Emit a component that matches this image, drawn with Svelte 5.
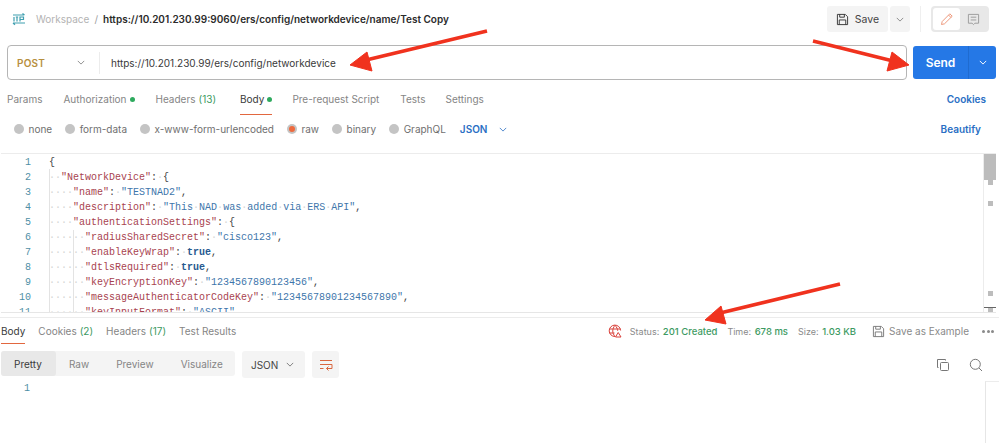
<script lang="ts">
	// Request builder view: header, url bar, request tabs, editor, response pane
	const requestTabs = [
		{ label: 'Params' },
		{ label: 'Authorization', dot: true },
		{ label: 'Headers', count: '(13)' },
		{ label: 'Body', dot: true, active: true },
		{ label: 'Pre-request Script' },
		{ label: 'Tests' },
		{ label: 'Settings' }
	];

	const bodyTypes = ['none', 'form-data', 'x-www-form-urlencoded', 'raw', 'binary', 'GraphQL'];

	const responseTabs = [
		{ label: 'Body', active: true },
		{ label: 'Cookies', count: '(2)' },
		{ label: 'Headers', count: '(17)' },
		{ label: 'Test Results' }
	];

	const views = ['Pretty', 'Raw', 'Preview', 'Visualize'];

	// scrollbar minimap ticks, y offset inside the editor
	const ticks = [26, 47, 137, 154];

	// t: k = key, s = string, b = boolean, p = punctuation
	const lines = [
		{ indent: 0, parts: [['p', '{']] },
		{ indent: 2, parts: [['k', '"NetworkDevice"'], ['p', ':'], ['d', '·'], ['p', '{']] },
		{ indent: 4, parts: [['k', '"name"'], ['p', ':'], ['d', '·'], ['s', '"TESTNAD2"'], ['p', ',']] },
		{ indent: 4, parts: [['k', '"description"'], ['p', ':'], ['d', '·'], ['s', '"This'], ['d', '·'], ['s', 'NAD'], ['d', '·'], ['s', 'was'], ['d', '·'], ['s', 'added'], ['d', '·'], ['s', 'via'], ['d', '·'], ['s', 'ERS'], ['d', '·'], ['s', 'API"'], ['p', ',']] },
		{ indent: 4, parts: [['k', '"authenticationSettings"'], ['p', ':'], ['d', '·'], ['p', '{']] },
		{ indent: 6, parts: [['k', '"radiusSharedSecret"'], ['p', ':'], ['d', '·'], ['s', '"cisco123"'], ['p', ',']] },
		{ indent: 6, parts: [['k', '"enableKeyWrap"'], ['p', ':'], ['d', '·'], ['b', 'true'], ['p', ',']] },
		{ indent: 6, parts: [['k', '"dtlsRequired"'], ['p', ':'], ['d', '·'], ['b', 'true'], ['p', ',']] },
		{ indent: 6, parts: [['k', '"keyEncryptionKey"'], ['p', ':'], ['d', '·'], ['s', '"1234567890123456"'], ['p', ',']] },
		{ indent: 6, parts: [['k', '"messageAuthenticatorCodeKey"'], ['p', ':'], ['d', '·'], ['s', '"12345678901234567890"'], ['p', ',']] },
		{ indent: 6, parts: [['k', '"keyInputFormat"'], ['p', ':'], ['d', '·'], ['s', '"ASCII"'], ['p', ',']] }
	];
</script>

<div class="page">
	<header class="topbar">
		<svg class="logo" viewBox="0 0 14 14" width="14" height="14" fill="none" stroke="#3f9fb0" stroke-width="1.200">
			<path d="M1 3h11M10.500 1.500 12.500 3M1 11h12M1 11l2 1.800" />
			<path d="M2 5v4.500M5 5v4.500M3.800 5h2.400M8 9.500V5h3.500v2.500H8" />
		</svg>
		<span class="crumb">Workspace</span>
		<span class="slash">/</span>
		<span class="title">https://10.201.230.99:9060/ers/config/networkdevice/name/Test Copy</span>
		<div class="top-actions">
			<button class="save" type="button">
				<svg viewBox="0 0 14 14" width="13" height="13" fill="none" stroke="#333" stroke-width="1">
					<path d="M1.500 1.500h8.500l2.500 2.500v8.500h-11z" />
					<path d="M4 1.500v3h5v-3M3.500 12.500v-5h7v5" />
				</svg>
				Save
			</button>
			<button class="save-more" type="button" aria-label="More">
				<svg viewBox="0 0 10 6" width="8" height="5" fill="none" stroke="#777" stroke-width="1"><path d="M1 1l4 4 4-4" /></svg>
			</button>
			<span class="vr"></span>
			<div class="mode">
				<span class="mode-on">
					<svg viewBox="0 0 14 14" width="14" height="14" fill="none" stroke="#ee9a7e" stroke-width="1">
						<path d="M1.500 12.500l.7-3L9.800 1.800l2.400 2.400-7.700 7.600zM8.500 3l2.500 2.500" />
					</svg>
				</span>
				<span class="mode-off">
					<svg viewBox="0 0 14 14" width="13" height="13" fill="none" stroke="#999" stroke-width="1">
						<path d="M1.500 1.500h11v9.500H8.500L7 12.500 5.500 11h-4zM4 4.500h6M4 7.500h6" />
					</svg>
				</span>
			</div>
		</div>
	</header>

	<div class="urlrow">
		<div class="urlbar">
			<span class="method">POST</span>
			<svg class="method-caret" viewBox="0 0 10 6" width="8" height="5" fill="none" stroke="#777" stroke-width="1"><path d="M1 1l4 4 4-4" /></svg>
			<span class="url">https://10.201.230.99/ers/config/networkdevice</span>
		</div>
		<div class="send">
			<span class="send-label">Send</span>
			<span class="send-more">
				<svg viewBox="0 0 10 6" width="8" height="5" fill="none" stroke="#fff" stroke-width="1.200"><path d="M1 1l4 4 4-4" /></svg>
			</span>
		</div>
	</div>

	<nav class="tabs req-tabs">
		{#each requestTabs as tab}
			<span class="tab" class:active={tab.active}>
				{tab.label}
				{#if tab.count}<span class="count">{tab.count}</span>{/if}
				{#if tab.dot}<i class="dot"></i>{/if}
			</span>
		{/each}
		<span class="link push">Cookies</span>
	</nav>

	<div class="bodytypes">
		{#each bodyTypes as type}
			<span class="radio-item">
				<i class="radio" class:on={type === 'raw'}></i>{type}
			</span>
		{/each}
		<span class="lang">JSON
			<svg viewBox="0 0 10 6" width="8" height="5" fill="none" stroke="#2a6fc4" stroke-width="1"><path d="M1 1l4 4 4-4" /></svg>
		</span>
		<span class="link push beautify">Beautify</span>
	</div>

	<section class="editor">
		<div class="code">
			{#each lines as line, i}
				<div class="line">
					<span class="ln">{i + 1}</span>
					<span class="src"><span class="ws">{'·'.repeat(line.indent)}</span>{#each line.parts as part}<span class={part[0]}>{part[1]}</span>{/each}</span>
				</div>
			{/each}
			<i class="guide g1"></i>
			<i class="guide g2"></i>
		</div>
		<div class="scroll">
			<i class="thumb"></i>
			{#each ticks as top}
				<i class="tick" style="top: {top}px"></i>
			{/each}
			<i class="cursor"></i>
		</div>
	</section>

	<nav class="tabs res-tabs">
		{#each responseTabs as tab}
			<span class="tab" class:active={tab.active}>
				{tab.label}
				{#if tab.count}<span class="count">{tab.count}</span>{/if}
			</span>
		{/each}
		<div class="status">
			<svg class="globe" viewBox="0 0 14 14" width="14" height="14" fill="none" stroke="#d9403a" stroke-width="1">
				<path d="M7 12.500A5.700 5.700 0 1 1 12.600 6.500M1.500 5h11M1.500 9h5M7 1.300C4 5 4 9 7 12.500M7 1.300c1.800 2 2.600 3.800 2.700 5.500" />
				<path d="M10.200 8.500l2.800 4.500H7.500z" />
			</svg>
			<span class="meta">Status: <b>201 Created</b></span>
			<span class="meta">Time: <b>678 ms</b></span>
			<span class="meta">Size: <b>1.03 KB</b></span>
			<span class="example">
				<svg viewBox="0 0 14 14" width="13" height="13" fill="none" stroke="#777" stroke-width="1">
					<path d="M1.500 1.500h8.500l2.500 2.500v8.500h-11z" />
					<path d="M4 1.500v3h5v-3M3.500 12.500v-5h7v5" />
				</svg>
				Save as Example
			</span>
			<span class="more"><i></i><i></i><i></i></span>
		</div>
	</nav>

	<div class="viewbar">
		<div class="views">
			{#each views as view, i}
				<span class="view" class:current={i === 0}>{view}</span>
			{/each}
		</div>
		<span class="format">JSON
			<svg viewBox="0 0 10 6" width="8" height="5" fill="none" stroke="#666" stroke-width="1"><path d="M1 1l4 4 4-4" /></svg>
		</span>
		<span class="wrap">
			<svg viewBox="0 0 14 14" width="14" height="14" fill="none" stroke="#d9663f" stroke-width="1">
				<path d="M1 2.500h12M1 6.500h12M1 10.500h3.500M13 6.500v4H7.500M9.500 8.500l-2 2 2 2" />
			</svg>
		</span>
		<div class="view-tools">
			<svg viewBox="0 0 14 14" width="14" height="14" fill="none" stroke="#777" stroke-width="1">
				<rect x="4.500" y="4.500" width="8" height="8" rx="1" />
				<path d="M2.500 9.500h-1v-8h8v1" />
			</svg>
			<svg viewBox="0 0 14 14" width="14" height="14" fill="none" stroke="#777" stroke-width="1">
				<circle cx="6.300" cy="6.300" r="5" />
				<path d="M10 10l3 3" />
			</svg>
		</div>
	</div>

	<div class="output">
		<span class="ln">1</span>
		<div class="output-scroll"></div>
	</div>

	<!-- annotation arrows drawn over the screenshot -->
	<svg class="arrows" viewBox="0 0 999 443" width="999" height="443">
		<g fill="#f0321e" stroke="#f0321e">
			<path d="M487 31 362 61" stroke-width="3.500" />
			<path d="M350 65 367 52 372 71z" />
			<path d="M813 41 897 62" stroke-width="3.500" />
			<path d="M909 65 892 52 887 71z" />
			<path d="M840 284 716 314" stroke-width="3.500" />
			<path d="M705 320 721 306 726 324z" />
		</g>
	</svg>
</div>

<style>
	:global(body) {
		margin: 0;
		background: #fff;
	}

	.page {
		position: relative;
		width: 999px;
		height: 443px;
		overflow: hidden;
		font-family: Inter, 'Liberation Sans', sans-serif;
		font-size: 10px;
		color: #6b6b6b;
		background: #fff;
	}

	svg {
		display: block;
		flex: none;
	}

	.topbar {
		display: flex;
		align-items: center;
		height: 26px;
		padding: 6px 10px 0 12px;
	}

	.logo {
		margin-right: 10px;
	}

	.crumb {
		color: #b3b3b3;
	}

	.slash {
		margin: 0 5px;
		color: #a0a0a0;
	}

	.title {
		color: #2b2b2b;
		font-weight: 600;
		white-space: nowrap;
	}

	.top-actions {
		display: flex;
		align-items: center;
		margin-left: auto;
	}

	.save,
	.save-more {
		display: flex;
		align-items: center;
		justify-content: center;
		height: 26px;
		border: 0;
		border-radius: 3px;
		background: #f4f4f4;
		font: inherit;
		font-size: 10.500px;
		color: #444;
		padding: 0;
	}

	.save {
		gap: 6px;
		width: 61px;
	}

	.save-more {
		width: 20px;
		margin-left: 2px;
	}

	.vr {
		width: 1px;
		height: 26px;
		margin: 0 10px;
		background: #efefef;
	}

	.mode {
		display: flex;
		width: 58px;
		height: 26px;
		box-sizing: border-box;
		padding: 2px;
		border-radius: 4px;
		background: #e8e8e8;
	}

	.mode-on,
	.mode-off {
		display: flex;
		align-items: center;
		justify-content: center;
		flex: 1;
	}

	.mode-on {
		background: #fff;
		border-radius: 3px;
		flex: 0 0 27px;
	}

	.urlrow {
		display: flex;
		align-items: center;
		gap: 6px;
		margin-top: 13px;
		padding: 0 3px 0 7px;
	}

	.urlbar {
		display: flex;
		align-items: center;
		flex: 1;
		height: 35px;
		box-sizing: border-box;
		padding-left: 9px;
		border: 1px solid #b5b5b5;
		border-radius: 4px;
	}

	.method {
		width: 60px;
		color: #b78f3e;
		font-weight: 600;
		letter-spacing: 0.2px;
	}

	.method-caret {
		margin-right: 14px;
	}

	.url {
		padding-left: 11px;
		border-left: 1px solid #ececec;
		line-height: 22px;
		color: #3a3a3a;
	}

	.send {
		display: flex;
		align-items: center;
		width: 83px;
		height: 33px;
		border-radius: 3px;
		background: #2578e6;
		color: #fff;
		font-weight: 600;
		font-size: 12px;
	}

	.send-label {
		flex: 1;
		text-align: center;
	}

	.send-more {
		display: flex;
		align-items: center;
		justify-content: center;
		width: 27px;
		height: 100%;
		border-left: 1px solid #1f6bd0;
	}

	.tabs {
		display: flex;
		align-items: center;
	}

	.req-tabs {
		height: 32px;
		margin-top: 3px;
		padding: 0 13px 0 7px;
		gap: 21px;
	}

	.req-tabs .tab:nth-child(3) {
		margin-right: 3px;
	}

	.req-tabs .tab:nth-child(4) {
		margin-right: -1px;
	}

	.req-tabs .tab:nth-child(6) {
		margin-right: -1px;
	}

	.tab {
		position: relative;
		display: flex;
		align-items: center;
		gap: 3px;
		height: 100%;
		color: #858585;
		white-space: nowrap;
	}

	.tab.active {
		color: #3a3a3a;
	}

	.tab.active::after {
		content: '';
		position: absolute;
		left: 0;
		right: 0;
		bottom: 0;
		height: 1.500px;
		background: #e2673f;
	}

	.count {
		color: #3d9a62;
	}

	.dot {
		width: 5px;
		height: 5px;
		border-radius: 50%;
		background: #2eaa5e;
	}

	.link {
		color: #2a6fc4;
		font-weight: 600;
		font-size: 10px;
	}

	.push {
		margin-left: auto;
	}

	.bodytypes {
		display: flex;
		align-items: center;
		gap: 13px;
		height: 24px;
		margin-top: 2px;
		padding: 0 18px 0 14px;
		color: #6f6f6f;
	}

	.radio-item {
		display: flex;
		align-items: center;
		gap: 4.500px;
		white-space: nowrap;
	}

	.radio {
		position: relative;
		width: 10px;
		height: 10px;
		border-radius: 50%;
		background: #c4c4c4;
	}

	.radio.on::after {
		content: '';
		position: absolute;
		inset: 2px;
		border-radius: 50%;
		background: #ee6a3e;
	}

	.lang {
		display: flex;
		align-items: center;
		gap: 12px;
		margin-left: 1px;
		color: #2a6fc4;
		font-weight: 600;
	}

	.beautify {
		margin-left: auto;
	}

	.editor {
		display: flex;
		height: 160px;
		margin: 12px 3px 0 1px;
		border-top: 1px solid #ececec;
		border-bottom: 1px solid #e6e6e6;
		box-sizing: border-box;
		overflow: hidden;
	}

	.code {
		position: relative;
		flex: 1;
		padding-top: 1px;
		overflow: hidden;
		font-family: 'Liberation Mono', 'DejaVu Sans Mono', monospace;
		font-size: 10px;
	}

	.line {
		display: flex;
		height: 15px;
		line-height: 15px;
		white-space: pre;
	}

	.ln {
		flex: none;
		width: 30px;
		text-align: right;
		color: #4f8fa6;
		font-family: 'Liberation Mono', monospace;
		font-size: 10px;
	}

	.src {
		padding-left: 18px;
	}

	.ws,
	.d {
		color: #d4d4d4;
	}

	.k {
		color: #a8434f;
	}

	.s {
		color: #3e76ab;
	}

	.b {
		color: #27598f;
		font-weight: 700;
	}

	.p {
		color: #444;
	}

	.guide {
		position: absolute;
		top: 15px;
		bottom: 0;
		width: 1px;
		background: #e3e3e3;
	}

	.g1 {
		left: 48px;
	}

	.g2 {
		top: 76px;
		left: 72px;
	}

	.scroll {
		position: relative;
		flex: none;
		width: 12px;
		border-left: 1px solid #ececec;
	}

	.thumb {
		position: absolute;
		top: 0;
		left: 0;
		width: 12px;
		height: 26px;
		background: #bcbcbc;
	}

	.tick {
		position: absolute;
		left: 4px;
		width: 5px;
		height: 5px;
		background: #bdbdbd;
	}

	.cursor {
		position: absolute;
		top: 153px;
		left: 0;
		width: 12px;
		height: 1px;
		background: #666;
	}

	.res-tabs {
		height: 26px;
		margin-top: 4px;
		padding: 0 5px 0 1px;
		gap: 13px;
		border-top: 1px solid #ececec;
	}

	.status {
		display: flex;
		align-items: center;
		margin-left: auto;
		gap: 10px;
		font-size: 9px;
		color: #8a8a8a;
	}

	.globe {
		margin-right: -2px;
	}

	.meta {
		white-space: nowrap;
	}

	.meta b {
		font-weight: 500;
		font-size: 9.500px;
		color: #3d9a62;
		margin-left: 1px;
	}

	.example {
		display: flex;
		align-items: center;
		gap: 4px;
		margin-left: 6px;
		font-size: 10px;
		white-space: nowrap;
	}

	.more {
		display: flex;
		gap: 1.500px;
		margin-left: 3px;
	}

	.more i {
		width: 3px;
		height: 3px;
		border-radius: 50%;
		background: #8a8a8a;
	}

	.viewbar {
		display: flex;
		align-items: flex-start;
		margin-top: 7px;
		padding-left: 1px;
	}

	.views {
		display: flex;
		width: 234px;
		height: 25px;
		border-radius: 3px;
		background: #f4f4f4;
	}

	.view {
		display: flex;
		align-items: center;
		padding: 0 14px;
		color: #858585;
	}

	.view:nth-child(2) {
		padding: 0 13px;
	}

	.view:nth-child(3) {
		padding-right: 13px;
	}

	.view.current {
		padding: 0 14px 0 13px;
		background: #e8e8e8;
		border-radius: 3px;
		color: #3a3a3a;
	}

	.format {
		display: flex;
		align-items: center;
		justify-content: space-between;
		box-sizing: border-box;
		width: 63px;
		height: 27px;
		margin-left: 7px;
		padding: 0 11px 0 9px;
		border-radius: 3px;
		background: #f4f4f4;
		color: #444;
	}

	.wrap {
		display: flex;
		align-items: center;
		justify-content: center;
		width: 27px;
		height: 27px;
		margin-left: 7px;
		border-radius: 3px;
		background: #f4f4f4;
	}

	.view-tools {
		display: flex;
		align-items: center;
		gap: 19px;
		height: 27px;
		margin-left: auto;
		padding-right: 16px;
	}

	.output {
		display: flex;
		align-items: flex-start;
		height: 62px;
		margin-top: 3px;
		line-height: 15px;
	}

	.output-scroll {
		width: 14px;
		height: 100%;
		margin-left: auto;
		box-sizing: border-box;
		border-top: 1px solid #ececec;
		border-left: 1px solid #e6e6e6;
	}

	.arrows {
		position: absolute;
		top: 0;
		left: 0;
		pointer-events: none;
	}
</style>
